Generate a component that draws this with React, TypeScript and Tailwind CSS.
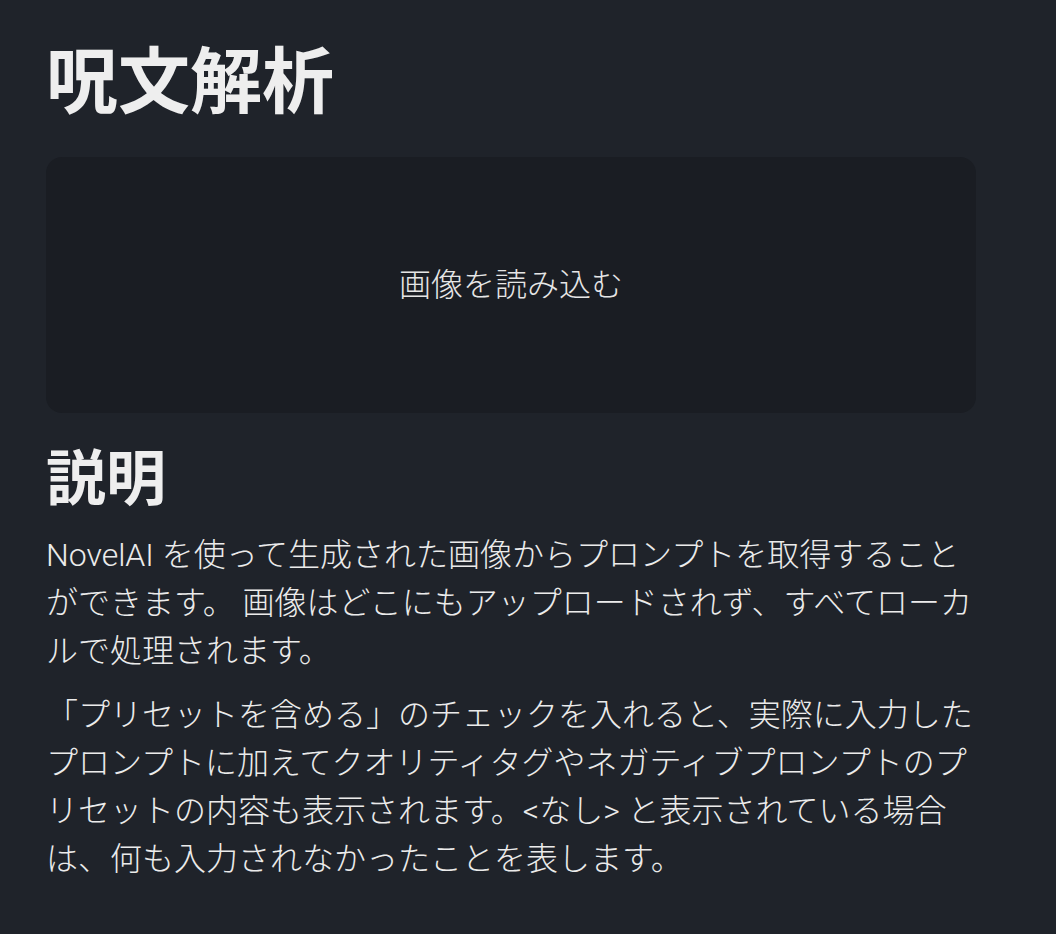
import React from "react";

const font = "font-['Liberation_Sans','Noto_Sans_CJK_JP',sans-serif]";
const body = "font-['Roboto','Noto_Sans_CJK_JP',sans-serif]";

export default function App() {
  return (
    <div className={`min-h-screen bg-[#1f232a] text-[#ebebeb] ${font}`}>
      <div className="px-[46px] pt-[39px] pb-10 w-[1022px]">
        <h1 className="text-[72px] leading-[86px] font-bold text-[#eeeeee]">呪文解析</h1>
        <div className="mt-8 h-[256px] rounded-2xl bg-[#1a1d23] flex items-center justify-center">
          <span className="text-[32px] leading-[48px] font-light text-[#e6e6e6]">画像を読み込む</span>
        </div>
        <h2 className="mt-[31px] text-[60px] leading-[72px] font-bold text-[#eeeeee]">説明</h2>
        <p className={`mt-[15px] text-[32px] leading-[48px] font-light ${body}`}>
          NovelAI を使って生成された画像からプロンプトを取得することができます。 画像はどこにもアップロードされず、すべてローカルで処理されます。
        </p>
        <p className={`mt-4 text-[32px] leading-[48px] font-light ${body}`}>
          「プリセットを含める」のチェックを入れると、実際に入力したプロンプトに加えてクオリティタグやネガティブプロンプトのプリセットの内容も表示されます。&lt;なし&gt; と表示されている場合は、何も入力されなかったことを表します。
        </p>
      </div>
    </div>
  );
}
